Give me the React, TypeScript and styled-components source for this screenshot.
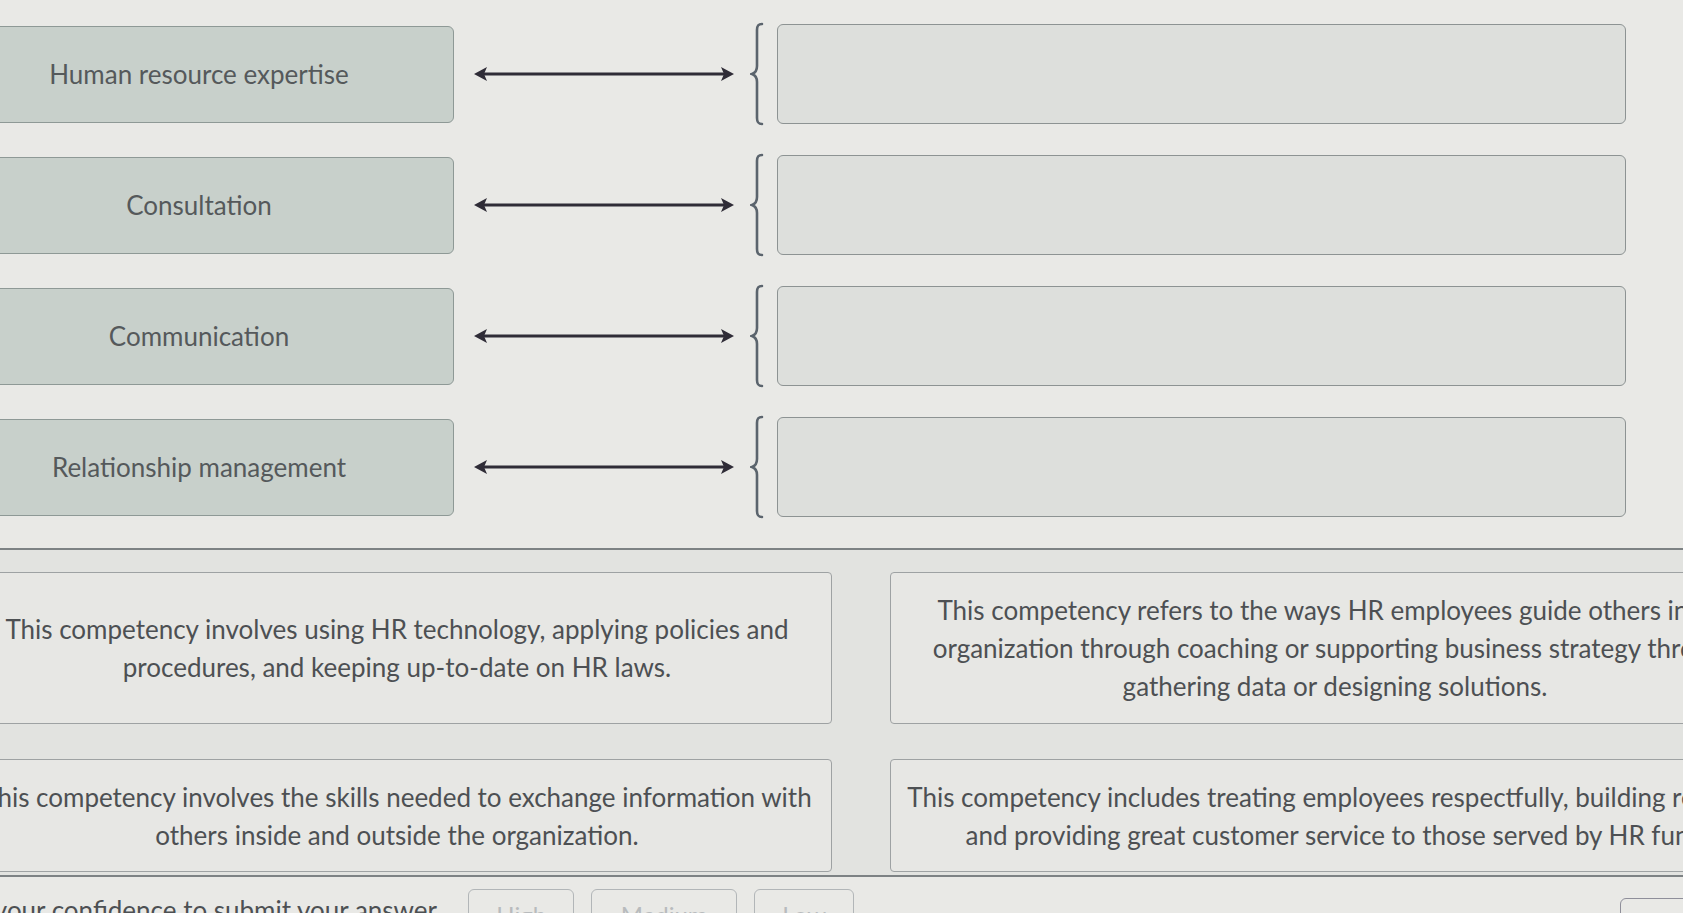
import React from 'react';
import styled, { createGlobalStyle } from 'styled-components';

const GlobalStyle = createGlobalStyle`
  html, body {
    margin: 0;
    padding: 0;
    background: #e9e9e6;
    overflow: hidden;
  }
  * {
    box-sizing: border-box;
  }
`;

const items = [
  'Human resource expertise',
  'Consultation',
  'Communication',
  'Relationship management',
];

// lines are broken where the screen breaks them
const descriptions = [
  {
    w: 870,
    lines: ['This competency involves using HR technology, applying policies and', 'procedures, and keeping up-to-date on HR laws.'],
  },
  {
    w: 890,
    lines: [
      'This competency refers to the ways HR employees guide others in the',
      'organization through coaching or supporting business strategy through',
      'gathering data or designing solutions.',
    ],
  },
  {
    w: 870,
    lines: ['This competency involves the skills needed to exchange information with', 'others inside and outside the organization.'],
  },
  {
    w: 950,
    lines: [
      'This competency includes treating employees respectfully, building relationships,',
      'and providing great customer service to those served by HR functions.',
    ],
  },
];

function Arrow() {
  return (
    <ArrowSvg viewBox="0 0 260 16" preserveAspectRatio="none">
      <line x1="8" y1="8" x2="252" y2="8" stroke="#2f2c37" strokeWidth="3" />
      <polygon points="0,8 13,1 10,8 13,15" fill="#2f2c37" />
      <polygon points="260,8 247,1 250,8 247,15" fill="#2f2c37" />
    </ArrowSvg>
  );
}

function Brace() {
  return (
    <BraceSvg viewBox="0 0 14 104" preserveAspectRatio="none">
      <path
        d="M12 2 C8 2 7 4 7 8 L7 44 C7 49 5 51 2 52 C5 53 7 55 7 60 L7 96 C7 100 8 102 12 102"
        fill="none"
        stroke="#5b646d"
        strokeWidth="2.6"
        strokeLinecap="round"
      />
    </BraceSvg>
  );
}

function Description({ lines }: { lines: string[] }) {
  return (
    <CardText>
      {lines.map((line, i) => (
        <React.Fragment key={i}>
          {i > 0 && <br />}
          {line}
        </React.Fragment>
      ))}
    </CardText>
  );
}

function App() {
  return (
    <Page>
      <GlobalStyle />
      <Matching>
        {items.map((label) => (
          <Row key={label}>
            <Label>{label}</Label>
            <Arrow />
            <Brace />
            <DropZone />
          </Row>
        ))}
      </Matching>
      <Divider />
      <Bank>
        <CardGrid>
          {descriptions.map((d, i) => (
            <Card key={i} $tall={i < 2} $w={d.w}>
              <Description lines={d.lines} />
            </Card>
          ))}
        </CardGrid>
      </Bank>
      <Divider />
      <Footer>
        <Prompt>Rate your confidence to submit your answer.</Prompt>
        <Choices>
          <Choice $w={106}>High</Choice>
          <Choice $w={146}>Medium</Choice>
          <Choice $w={100}>Low</Choice>
        </Choices>
        <Submit />
      </Footer>
    </Page>
  );
}

const Page = styled.div`
  width: 1683px;
  height: 913px;
  overflow: hidden;
  font-family: 'Lato', 'Open Sans', sans-serif;
  color: #4f5255;
`;

const Matching = styled.div`
  display: flex;
  flex-direction: column;
  gap: 33px;
  padding: 25px 0 32px;
  margin-left: -56px;
  width: 1760px;
`;

const Row = styled.div`
  display: flex;
  align-items: center;
  height: 98px;
`;

const Label = styled.div`
  flex: 0 0 510px;
  height: 97px;
  display: flex;
  align-items: center;
  justify-content: center;
  background: #c8d0cb;
  border: 1.5px solid #8e9996;
  border-radius: 6px;
  font-size: 26px;
  color: #55595b;
`;

const ArrowSvg = styled.svg`
  flex: 0 0 260px;
  height: 16px;
  margin-left: 20px;
`;

const BraceSvg = styled.svg`
  flex: 0 0 14px;
  height: 104px;
  margin-left: 16px;
`;

const DropZone = styled.div`
  flex: 0 0 849px;
  height: 100px;
  margin-left: 13px;
  background: #dddfdc;
  border: 1.5px solid #8d9393;
  border-radius: 6px;
`;

const Divider = styled.div`
  height: 2px;
  background: #7d8284;
  width: 100%;
`;

const Bank = styled.div`
  background: #e2e3e0;
  padding: 22px 0 3px;
  margin-left: -38px;
  width: 1900px;
`;

const CardGrid = styled.div`
  display: grid;
  grid-template-columns: 870px 990px;
  column-gap: 58px;
  row-gap: 35px;
`;

const Card = styled.div<{ $tall?: boolean; $w: number }>`
  width: ${(p) => p.$w}px;
  height: ${(p) => (p.$tall ? 152 : 113)}px;
  display: flex;
  align-items: center;
  justify-content: center;
  background: #e7e7e4;
  border: 1.5px solid #9ea2a3;
  border-radius: 4px;
  overflow: hidden;
`;

const CardText = styled.p`
  margin: 0;
  text-align: center;
  white-space: nowrap;
  font-size: 26px;
  line-height: 38px;
  color: #4d5053;
`;

const Footer = styled.div`
  display: flex;
  align-items: flex-start;
  padding-top: 12px;
  margin-left: -64px;
  width: 1900px;
`;

const Prompt = styled.div`
  font-size: 26px;
  padding-top: 5px;
  color: #4d5053;
  white-space: nowrap;
`;

const Choices = styled.div`
  display: flex;
  gap: 17px;
  margin-left: 26px;
`;

const Choice = styled.div<{ $w: number }>`
  width: ${(p) => p.$w}px;
  height: 50px;
  display: flex;
  align-items: center;
  justify-content: center;
  border: 1.5px solid #b2b6b8;
  border-radius: 6px;
  font-size: 24px;
  color: #b8bbbd;
`;

const Submit = styled.div`
  width: 140px;
  height: 50px;
  margin-left: 766px;
  margin-top: 9px;
  border: 1.5px solid #8f8f9a;
  border-radius: 6px;
`;

export default App;
